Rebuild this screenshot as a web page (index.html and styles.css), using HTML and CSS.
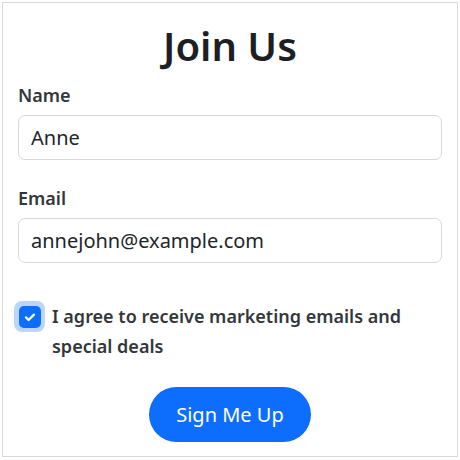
FILE: index.html
```html
<!DOCTYPE html>
<html lang="en">
<head>
<meta charset="utf-8">
<title>Join Us</title>
<link rel="stylesheet" href="styles.css">
</head>
<body>
<div class="card">
  <h1 class="title">Join Us</h1>
  <div class="field">
    <label class="label" for="name">Name</label>
    <input class="input" id="name" type="text" value="Anne">
  </div>
  <div class="field">
    <label class="label" for="email">Email</label>
    <input class="input" id="email" type="email" value="annejohn@example.com">
  </div>
  <div class="check">
    <span class="box-ring"><span class="box"><svg viewBox="0 0 20 20" width="16" height="16"><path d="M5 10.5l3.2 3.2L15 7" fill="none" stroke="#fff" stroke-width="2.8" stroke-linecap="round" stroke-linejoin="round"/></svg></span></span>
    <span class="check-text">I agree to receive marketing emails and special deals</span>
  </div>
  <div class="actions">
    <button class="btn" type="button">Sign Me Up</button>
  </div>
</div>
</body>
</html>
```

FILE: styles.css
```css
* { box-sizing: border-box; }
html, body { margin: 0; padding: 0; background: #fff; }
body {
  font-family: "Noto Sans", "Open Sans", sans-serif;
  color: #212529;
}
.card {
  margin: 2px;
  width: 456px;
  height: 455px;
  border: 1px solid #d9d9d9;
  padding: 15px 15px 0 15px;
}
.title {
  margin: 0;
  text-align: center;
  font-size: 40px;
  font-weight: 600;
  line-height: 56px;
  color: #1c1f23;
}
.field { margin-top: 9px; }
.field + .field { margin-top: 26px; }
.label {
  display: block;
  font-size: 18px;
  font-weight: 600;
  line-height: 24px;
  margin-bottom: 8px;
  color: #33373b;
}
.input {
  display: block;
  width: 100%;
  height: 45px;
  border: 1px solid #d6d9dc;
  border-radius: 7px;
  padding: 0 12px;
  font-family: inherit;
  font-size: 20px;
  color: #212529;
  background: #fff;
}
.check {
  display: flex;
  align-items: flex-start;
  margin-top: 38px;
  gap: 7px;
}
.box-ring {
  flex: none;
  width: 31px;
  height: 31px;
  border-radius: 8px;
  background: #bcd6fb;
  display: flex;
  align-items: center;
  justify-content: center;
  margin-left: -4px;
  margin-top: 0;
}
.box {
  width: 22px;
  height: 22px;
  border-radius: 5px;
  background: #0d6efd;
  display: flex;
  align-items: center;
  justify-content: center;
}
.check-text {
  font-size: 18px;
  font-weight: 600;
  line-height: 30px;
  color: #33373b;
}
.actions {
  display: flex;
  justify-content: center;
  margin-top: 26px;
}
.btn {
  width: 162px;
  height: 55px;
  border: none;
  border-radius: 28px;
  background: #0d6efd;
  color: #fff;
  font-family: inherit;
  font-size: 20px;
  font-weight: 400;
}
```
